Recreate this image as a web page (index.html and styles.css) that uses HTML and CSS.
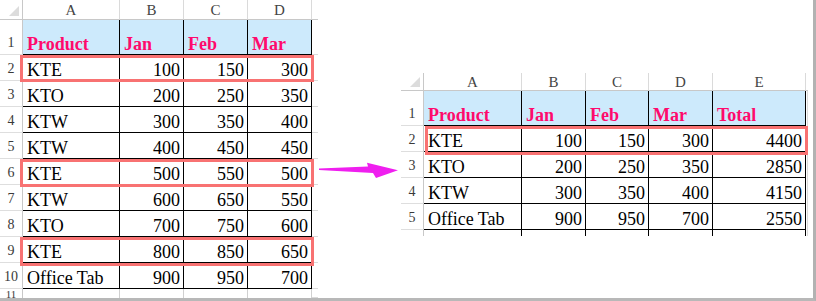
FILE: index.html
```html
<!DOCTYPE html>
<html>
<head>
<meta charset="utf-8">
<link rel="stylesheet" href="styles.css">
</head>
<body>
<div class="page">
  <div class="sheet left">
    <div class="corner"><span class="tri"></span></div>
    <div class="hd">A</div><div class="hd">B</div><div class="hd">C</div><div class="hd">D</div><div class="hd stubh"></div>

    <div class="rh">1</div>
    <div class="c t">Product</div><div class="c t">Jan</div><div class="c t">Feb</div><div class="c t">Mar</div><div class="stub"></div>

    <div class="rh">2</div>
    <div class="c">KTE</div><div class="c n">100</div><div class="c n">150</div><div class="c n">300</div><div class="stub"></div>
    <div class="rh">3</div>
    <div class="c">KTO</div><div class="c n">200</div><div class="c n">250</div><div class="c n">350</div><div class="stub"></div>
    <div class="rh">4</div>
    <div class="c">KTW</div><div class="c n">300</div><div class="c n">350</div><div class="c n">400</div><div class="stub"></div>
    <div class="rh">5</div>
    <div class="c">KTW</div><div class="c n">400</div><div class="c n">450</div><div class="c n">450</div><div class="stub"></div>
    <div class="rh">6</div>
    <div class="c">KTE</div><div class="c n">500</div><div class="c n">550</div><div class="c n">500</div><div class="stub"></div>
    <div class="rh">7</div>
    <div class="c">KTW</div><div class="c n">600</div><div class="c n">650</div><div class="c n">550</div><div class="stub"></div>
    <div class="rh">8</div>
    <div class="c">KTO</div><div class="c n">700</div><div class="c n">750</div><div class="c n">600</div><div class="stub"></div>
    <div class="rh">9</div>
    <div class="c">KTE</div><div class="c n">800</div><div class="c n">850</div><div class="c n">650</div><div class="stub"></div>
    <div class="rh">10</div>
    <div class="c">Office Tab</div><div class="c n">900</div><div class="c n">950</div><div class="c n">700</div><div class="stub"></div>
    <div class="rh rp">11</div>
    <div class="e"></div><div class="e"></div><div class="e"></div><div class="e"></div><div class="stub"></div>

    <div class="box lb2"></div>
    <div class="box lb6"></div>
    <div class="box lb9"></div>
  </div>

  <div class="arrow">
    <svg width="84" height="24" viewBox="0 0 84 24">
      <polygon points="1,10.6 50,8.6 49,4.8 80,12.3 58,20 55,15 1,12" fill="#ef1fef"/>
    </svg>
  </div>

  <div class="sheet right">
    <div class="corner"><span class="tri"></span></div>
    <div class="hd">A</div><div class="hd">B</div><div class="hd">C</div><div class="hd">D</div><div class="hd">E</div><div class="hd stubh"></div>

    <div class="rh">1</div>
    <div class="c t">Product</div><div class="c t">Jan</div><div class="c t">Feb</div><div class="c t">Mar</div><div class="c t">Total</div><div class="blank"></div>

    <div class="rh">2</div>
    <div class="c">KTE</div><div class="c n">100</div><div class="c n">150</div><div class="c n">300</div><div class="c n">4400</div><div class="blank"></div>
    <div class="rh">3</div>
    <div class="c">KTO</div><div class="c n">200</div><div class="c n">250</div><div class="c n">350</div><div class="c n">2850</div><div class="blank"></div>
    <div class="rh">4</div>
    <div class="c">KTW</div><div class="c n">300</div><div class="c n">350</div><div class="c n">400</div><div class="c n">4150</div><div class="blank"></div>
    <div class="rh">5</div>
    <div class="c">Office Tab</div><div class="c n">900</div><div class="c n">950</div><div class="c n">700</div><div class="c n">2550</div><div class="blank"></div>
    <div class="rh rp"></div>
    <div class="ek"></div><div class="ek"></div><div class="ek"></div><div class="ek"></div><div class="ek"></div><div class="blank"></div>

    <div class="box rb2"></div>
  </div>
</div>
</body>
</html>
```

FILE: styles.css
```css
html, body {
  margin: 0;
  padding: 0;
  background: #ffffff;
}

.page {
  width: 816px;
  height: 301px;
  box-sizing: border-box;
  border-right: 3px solid #b2b2b2;
  border-bottom: 3px solid #b8b8b8;
  display: flex;
  align-items: flex-start;
  overflow: hidden;
  background: #ffffff;
  font-family: "Liberation Serif", "Tinos", "Times New Roman", "DejaVu Serif", serif;
  color: #000;
}

.sheet {
  display: grid;
  position: relative;
  flex: none;
}

.left {
  grid-template-columns: 23px 97px 64px 64px 64px 6px;
  grid-template-rows: 20px 35px repeat(9, 26px) 9px;
}

.right {
  margin-top: 73px;
  grid-template-columns: 23px 98px 64px 63px 64px 93px 2px;
  grid-template-rows: 18px 35px repeat(4, 26px) 6px;
}

.sheet > div {
  box-sizing: border-box;
  min-width: 0;
}

.corner {
  border-right: 1px solid #c8c8c8;
  border-bottom: 1px solid #c8c8c8;
  position: relative;
}

.tri {
  position: absolute;
  right: 3px;
  bottom: 3px;
  width: 0;
  height: 0;
  border-left: 10px solid transparent;
  border-bottom: 10px solid #dcdcdc;
}

.hd {
  border-right: 1px solid #dadada;
  border-bottom: 1px solid #c8c8c8;
  display: flex;
  align-items: center;
  justify-content: center;
  font-size: 15px;
  color: #444;
  line-height: 18px;
  padding-top: 1px;
}

.stubh {
  border-right: none;
}

.rh {
  border-right: 1px solid #c8c8c8;
  border-bottom: 1px solid #dedede;
  display: flex;
  align-items: flex-end;
  justify-content: center;
  font-size: 14px;
  line-height: 20px;
  color: #3a3a3a;
  padding-bottom: 1px;
  overflow: hidden;
}

.rp {
  border-bottom: none;
  align-items: flex-start;
  font-size: 11px;
  line-height: 9px;
  padding-top: 1px;
}

.c {
  border-right: 1px solid #000;
  border-bottom: 1px solid #000;
  display: flex;
  align-items: flex-end;
  padding: 0 3px 0 4px;
  font-size: 18px;
  line-height: 20px;
  white-space: nowrap;
}

.n {
  justify-content: flex-end;
}

.t {
  background: #cdeafc;
  color: #ff0a6c;
  font-weight: bold;
}

.stub {
  border-bottom: 1px solid #dadada;
}

.blank {
  border-right: 1px solid #dadada;
}

.e {
  border-right: 1px solid #d0d0d0;
}

.ek {
  border-right: 1px solid #000;
}

.arrow {
  flex: none;
  width: 83px;
  margin-top: 158px;
  height: 24px;
}

.arrow svg {
  display: block;
}

.box {
  position: absolute;
  box-sizing: border-box;
  border: 3px solid #f87272;
}

.lb2 { left: 20px; top: 55px; width: 294px; height: 27px; }
.lb6 { left: 20px; top: 159px; width: 294px; height: 28px; }
.lb9 { left: 20px; top: 237px; width: 294px; height: 29px; }
.rb2 { left: 24px; top: 53px; width: 383px; height: 29px; }
```
